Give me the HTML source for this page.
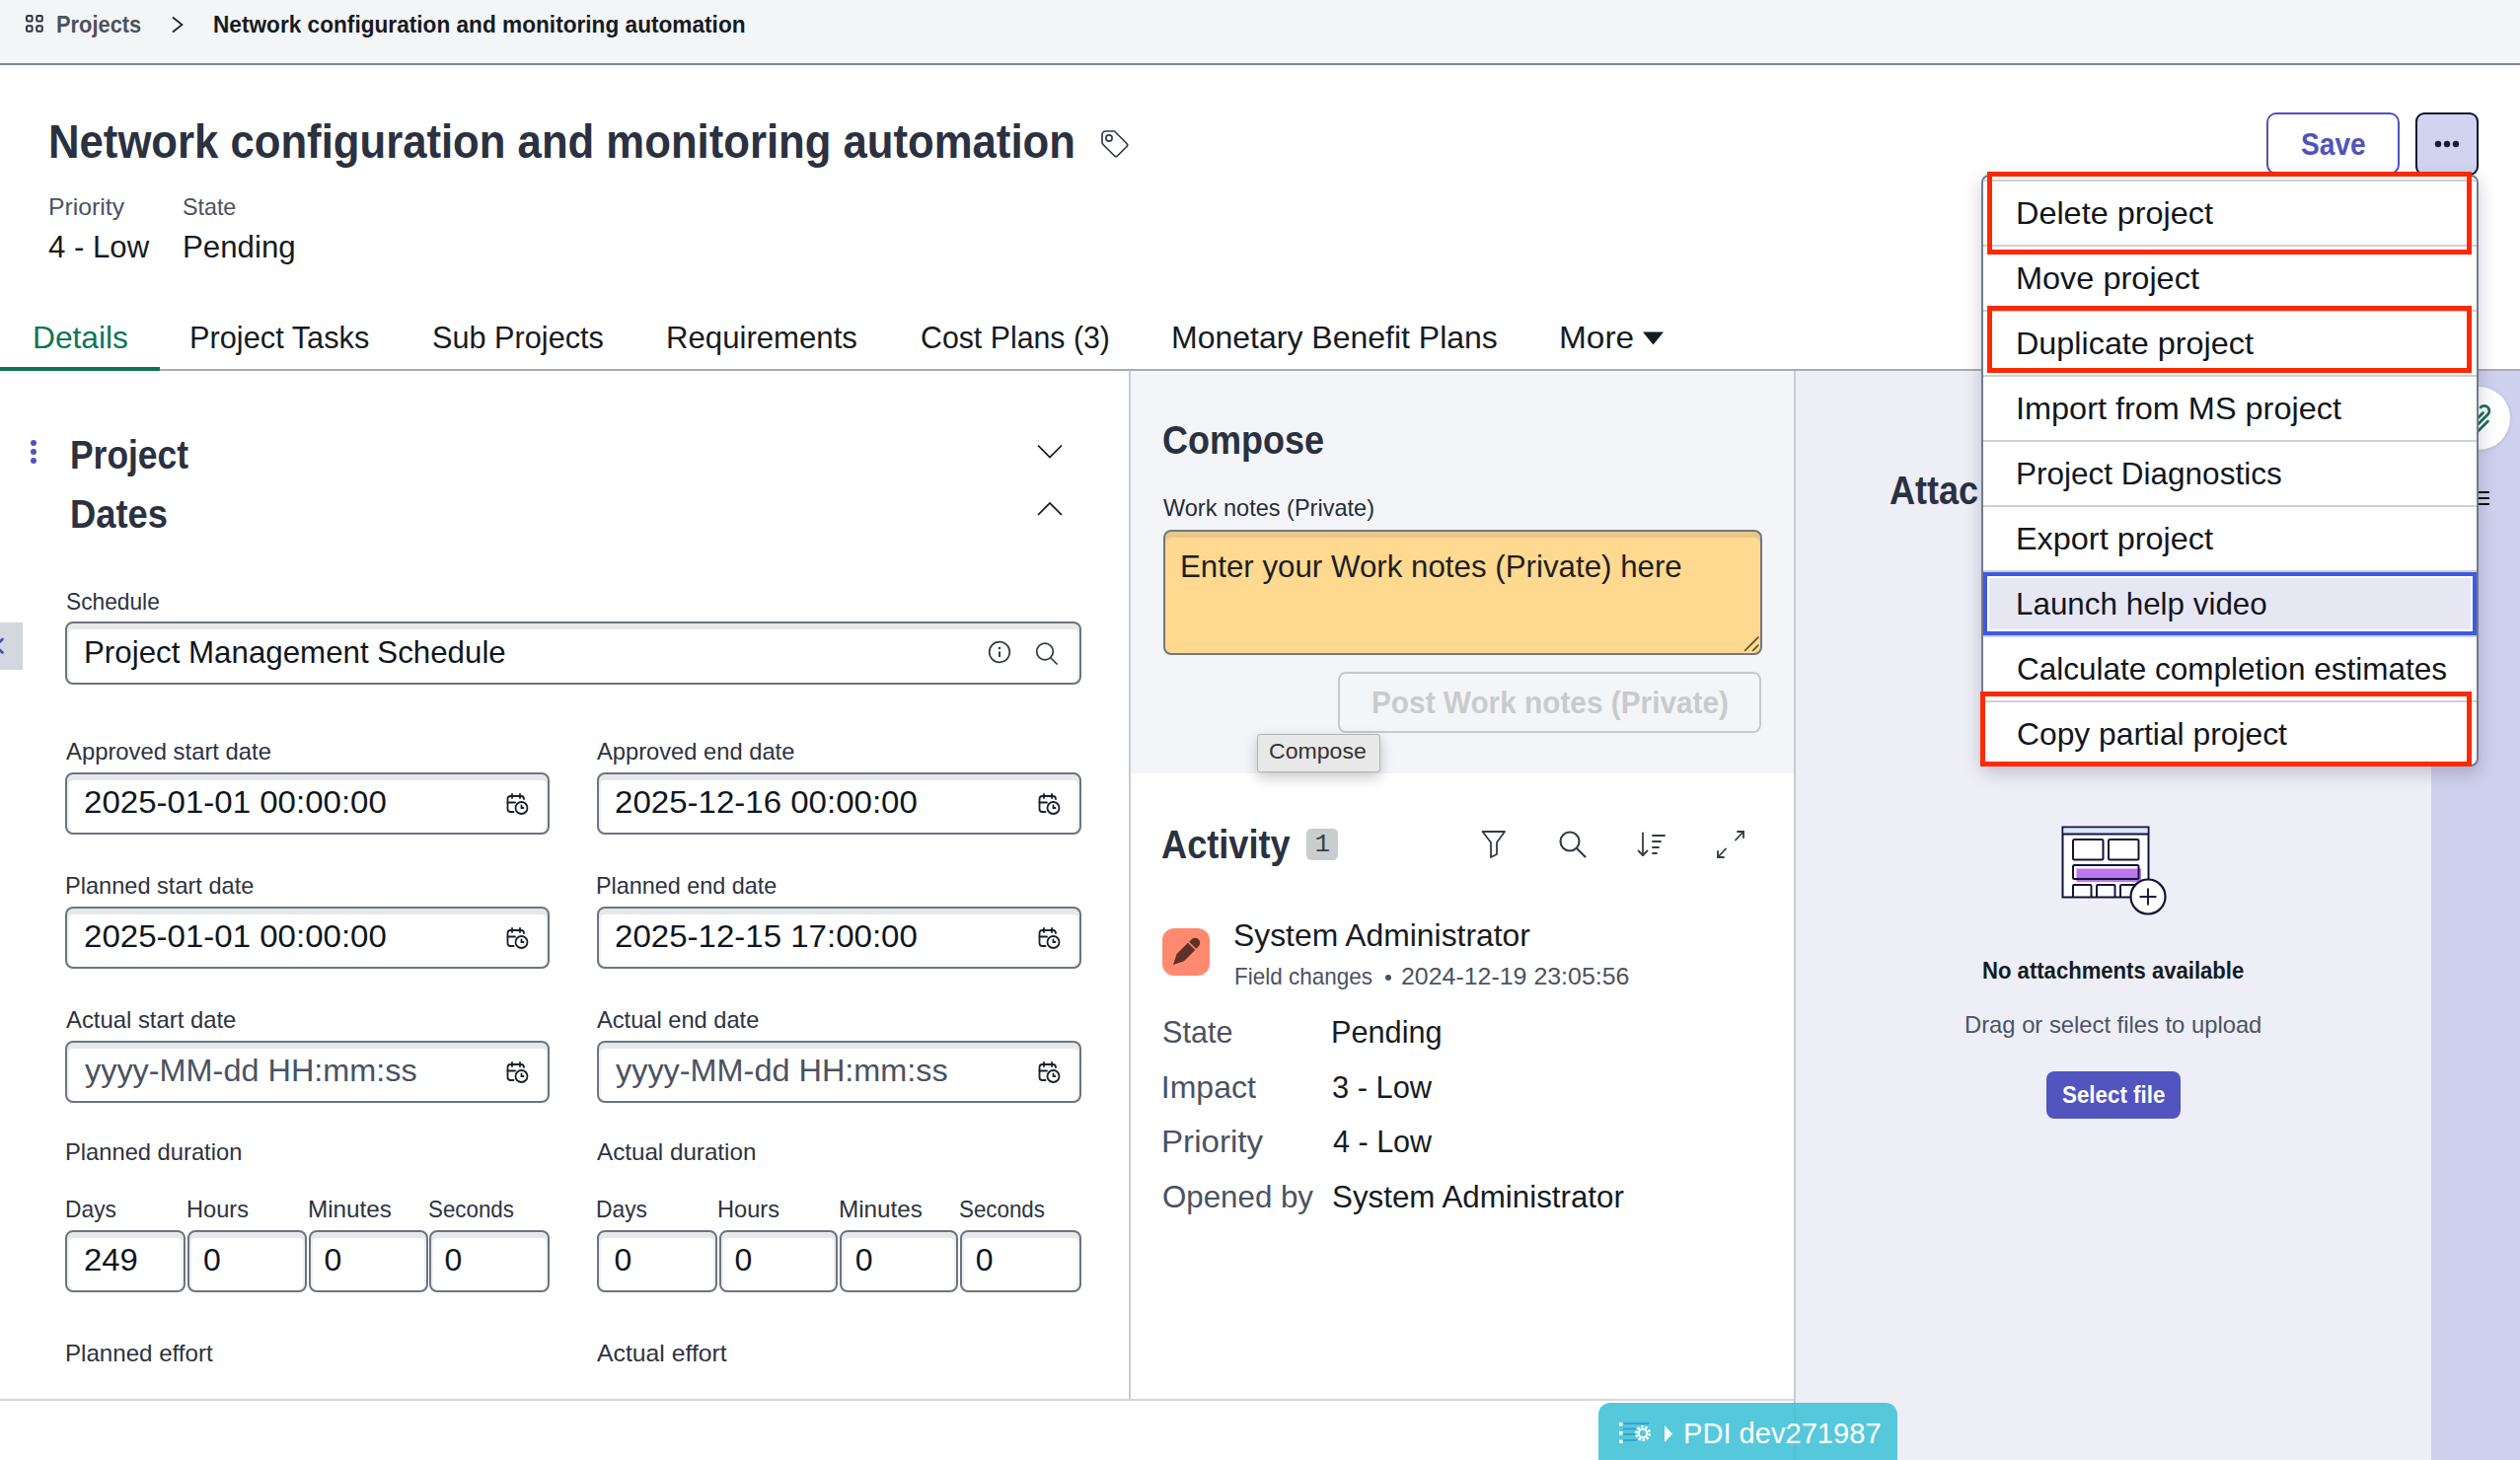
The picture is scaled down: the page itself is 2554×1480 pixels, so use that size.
<!DOCTYPE html>
<html><head><meta charset="utf-8"><title>Project</title>
<style>
html,body{margin:0;padding:0}
body{width:2554px;height:1480px;overflow:hidden;position:relative;background:#fff;font-family:"Liberation Sans",sans-serif}
.a{position:absolute;box-sizing:border-box}
.t{position:absolute;white-space:nowrap;transform-origin:0 0;font-family:"Liberation Sans",sans-serif;z-index:2}
.inp{position:absolute;box-sizing:border-box;border:2px solid #6e7380;border-radius:8px;background:#fff;box-shadow:inset 0 6px 0 #e6e8ea, inset 2px 0 0 #eef0f2, inset -2px 0 0 #eef0f2}
svg{position:absolute;overflow:visible}
.sep{position:absolute;left:2010px;width:500px;height:2px;background:#cdd0d6;z-index:6}
.red{position:absolute;box-sizing:border-box;border:5px solid #fb2a04;z-index:20}
</style></head><body>
<!-- top bar -->
<div class="a" style="left:0;top:0;width:2554px;height:64px;background:#f4f5f7"></div>
<div class="a" style="left:0;top:64px;width:2554px;height:2px;background:#80868f"></div>
<svg style="left:26px;top:15px" width="18" height="18" viewBox="0 0 18 18"><g fill="none" stroke="#30363f" stroke-width="2"><rect x="1" y="1" width="5.6" height="5.6" rx="1.3"/><rect x="11.2" y="1" width="5.6" height="5.6" rx="1.3"/><rect x="1" y="11.2" width="5.6" height="5.6" rx="1.3"/><rect x="11.2" y="11.2" width="5.6" height="5.6" rx="1.3"/></g></svg>
<svg style="left:0;top:0" width="1" height="1"><polyline points="175,17.5 184.5,25 175,32.5" fill="none" stroke="#1a1e25" stroke-width="1.7"/></svg>
<!-- tag icon -->
<svg style="left:0;top:0" width="1" height="1"><g fill="none" stroke="#343a46" stroke-width="1.7" stroke-linejoin="round"><path d="M1117,137 Q1117,133 1121,133 L1129.5,133 L1142,145.5 Q1143.5,147 1142,148.5 L1132.5,158 Q1131,159.5 1129.5,158 L1118,146.5 Q1117,145.5 1117,144 Z"/><circle cx="1124" cy="140" r="3.1"/></g></svg>
<!-- buttons -->
<div class="a" style="left:2297px;top:114px;width:135px;height:63px;border:2px solid #5053bd;border-radius:10px;background:#fff"></div>
<div class="a" style="left:2448px;top:114px;width:64px;height:64px;border:2px solid #0f1230;border-radius:9px;background:#d2d3ef"></div>
<svg style="left:0;top:0" width="1" height="1"><g fill="#1a1c3a"><circle cx="2471" cy="146" r="3.2"/><circle cx="2480" cy="146" r="3.2"/><circle cx="2489" cy="146" r="3.2"/></g></svg>
<!-- tabs -->
<div class="a" style="left:0;top:374px;width:2554px;height:2px;background:#a9abb5"></div>
<div class="a" style="left:0;top:372px;width:162px;height:4px;background:#0e7553"></div>
<svg style="left:0;top:0" width="1" height="1"><polygon points="1665,336.5 1686,336.5 1675.5,349.5" fill="#161b22"/></svg>
<!-- panels -->
<div class="a" style="left:1144px;top:376px;width:2px;height:1043px;background:#c9cbd3"></div>
<div class="a" style="left:1146px;top:376px;width:672px;height:408px;background:#f4f5f8"></div>
<div class="a" style="left:1818px;top:376px;width:2px;height:1104px;background:#c9cbd3"></div>
<div class="a" style="left:1820px;top:376px;width:644px;height:1104px;background:#eeeef7"></div>
<div class="a" style="left:2464px;top:376px;width:90px;height:1104px;background:#cfd0ed"></div>
<div class="a" style="left:0;top:1418px;width:1818px;height:2px;background:#d5d7dd"></div>
<!-- section header -->
<svg style="left:0;top:0" width="1" height="1"><g fill="#5053bd"><circle cx="34" cy="449" r="3"/><circle cx="34" cy="458" r="3"/><circle cx="34" cy="467" r="3"/></g>
<g fill="none" stroke="#111" stroke-width="1.7"><polyline points="1052,451.5 1064,463.5 1076,451.5"/><polyline points="1052,522 1064,510 1076,522"/></g></svg>
<div class="a" style="left:0;top:631px;width:23px;height:48px;background:#d5d7e0"></div>
<svg style="left:0;top:0" width="1" height="1"><polyline points="2.5,648 -4.5,654.8 2.5,661.5" fill="none" stroke="#4b4fb0" stroke-width="2.6" stroke-linecap="round"/></svg>
<!-- inputs -->
<div class="inp" style="left:66px;top:630px;width:1030px;height:64px"></div>
<svg style="left:0;top:0" width="1" height="1"><g fill="none" stroke="#343a46" stroke-width="1.7"><circle cx="1013" cy="661" r="10.3"/><circle cx="1059" cy="660.5" r="8.3"/><line x1="1065" y1="667" x2="1071.5" y2="673.5"/><line x1="1013" y1="660.5" x2="1013" y2="666" stroke-width="2"/></g><circle cx="1013" cy="657" r="1.3" fill="#343a46"/></svg>
<div class="inp" style="left:66px;top:782.5px;width:491px;height:63px"></div>
<div class="inp" style="left:605px;top:782.5px;width:491px;height:63px"></div>
<div class="inp" style="left:66px;top:918.5px;width:491px;height:63px"></div>
<div class="inp" style="left:605px;top:918.5px;width:491px;height:63px"></div>
<div class="inp" style="left:66px;top:1054.5px;width:491px;height:63px"></div>
<div class="inp" style="left:605px;top:1054.5px;width:491px;height:63px"></div>
<svg style="left:0;top:0" width="1" height="1">
<g fill="none" stroke="#1b1f27" stroke-width="1.8" stroke-linecap="round" transform="translate(513,804)"><path d="M7.5,19 H4.5 Q1.5,19 1.5,16 V6 Q1.5,3 4.5,3 H15 Q18,3 18,6"/><line x1="6" y1="1" x2="6" y2="5"/><line x1="14" y1="1" x2="14" y2="5"/><line x1="1.5" y1="9.5" x2="9" y2="9.5"/><circle cx="15.5" cy="15" r="6"/><path d="M15.5,12.5 V15 H17.5"/></g><g fill="none" stroke="#1b1f27" stroke-width="1.8" stroke-linecap="round" transform="translate(1052,804)"><path d="M7.5,19 H4.5 Q1.5,19 1.5,16 V6 Q1.5,3 4.5,3 H15 Q18,3 18,6"/><line x1="6" y1="1" x2="6" y2="5"/><line x1="14" y1="1" x2="14" y2="5"/><line x1="1.5" y1="9.5" x2="9" y2="9.5"/><circle cx="15.5" cy="15" r="6"/><path d="M15.5,12.5 V15 H17.5"/></g><g fill="none" stroke="#1b1f27" stroke-width="1.8" stroke-linecap="round" transform="translate(513,940)"><path d="M7.5,19 H4.5 Q1.5,19 1.5,16 V6 Q1.5,3 4.5,3 H15 Q18,3 18,6"/><line x1="6" y1="1" x2="6" y2="5"/><line x1="14" y1="1" x2="14" y2="5"/><line x1="1.5" y1="9.5" x2="9" y2="9.5"/><circle cx="15.5" cy="15" r="6"/><path d="M15.5,12.5 V15 H17.5"/></g><g fill="none" stroke="#1b1f27" stroke-width="1.8" stroke-linecap="round" transform="translate(1052,940)"><path d="M7.5,19 H4.5 Q1.5,19 1.5,16 V6 Q1.5,3 4.5,3 H15 Q18,3 18,6"/><line x1="6" y1="1" x2="6" y2="5"/><line x1="14" y1="1" x2="14" y2="5"/><line x1="1.5" y1="9.5" x2="9" y2="9.5"/><circle cx="15.5" cy="15" r="6"/><path d="M15.5,12.5 V15 H17.5"/></g><g fill="none" stroke="#1b1f27" stroke-width="1.8" stroke-linecap="round" transform="translate(513,1076)"><path d="M7.5,19 H4.5 Q1.5,19 1.5,16 V6 Q1.5,3 4.5,3 H15 Q18,3 18,6"/><line x1="6" y1="1" x2="6" y2="5"/><line x1="14" y1="1" x2="14" y2="5"/><line x1="1.5" y1="9.5" x2="9" y2="9.5"/><circle cx="15.5" cy="15" r="6"/><path d="M15.5,12.5 V15 H17.5"/></g><g fill="none" stroke="#1b1f27" stroke-width="1.8" stroke-linecap="round" transform="translate(1052,1076)"><path d="M7.5,19 H4.5 Q1.5,19 1.5,16 V6 Q1.5,3 4.5,3 H15 Q18,3 18,6"/><line x1="6" y1="1" x2="6" y2="5"/><line x1="14" y1="1" x2="14" y2="5"/><line x1="1.5" y1="9.5" x2="9" y2="9.5"/><circle cx="15.5" cy="15" r="6"/><path d="M15.5,12.5 V15 H17.5"/></g>
</svg>
<div class="inp" style="left:66px;top:1246.5px;width:121.5px;height:63px"></div>
<div class="inp" style="left:189.5px;top:1246.5px;width:121px;height:63px"></div>
<div class="inp" style="left:312.5px;top:1246.5px;width:121px;height:63px"></div>
<div class="inp" style="left:435px;top:1246.5px;width:122px;height:63px"></div>
<div class="inp" style="left:605px;top:1246.5px;width:122px;height:63px"></div>
<div class="inp" style="left:729px;top:1246.5px;width:120px;height:63px"></div>
<div class="inp" style="left:851px;top:1246.5px;width:120px;height:63px"></div>
<div class="inp" style="left:973px;top:1246.5px;width:123px;height:63px"></div>
<!-- compose -->
<div class="inp" style="left:1178.5px;top:536.5px;width:607.5px;height:127px;background:#fed98f;border-color:#73767f;box-shadow:inset 0 6px 0 #e6c889"></div>
<svg style="left:0;top:0" width="1" height="1"><g stroke="#5e4a1c" stroke-width="1.6" stroke-linecap="round"><line x1="1768.5" y1="659.5" x2="1782" y2="646"/><line x1="1776.5" y1="659.5" x2="1782" y2="654"/></g></svg>
<div class="a" style="left:1355.5px;top:680.5px;width:429.5px;height:62.5px;border:2px solid #c8c9cc;border-radius:8px"></div>
<div class="a" style="left:1273.5px;top:743.5px;width:125px;height:39px;background:#e8e8e8;border:1px solid #b3b3b3;border-radius:3px;box-shadow:0 5px 14px rgba(0,0,0,.22);z-index:3"></div>
<!-- activity -->
<div class="a" style="left:1324px;top:840px;width:32px;height:32px;background:#c9cdcd;border-radius:5px"></div>
<div class="t" style="left:1332.5px;top:843px;font-family:'Liberation Mono',monospace;font-size:26px;line-height:26px;color:#3a3f3f">1</div>
<svg style="left:0;top:0" width="1" height="1"><g fill="none" stroke="#343a46" stroke-width="1.8" stroke-linejoin="round" stroke-linecap="round">
<path d="M1502.5,843 H1525 L1517,854 V866 L1511,869 V854 Z"/>
<circle cx="1591" cy="853" r="9.5" stroke-width="2.1"/><line x1="1598" y1="860" x2="1606.5" y2="868.5" stroke-width="2.1"/>
<line x1="1665" y1="844.5" x2="1665" y2="867"/><polyline points="1660.5,862.5 1665,867 1669.5,862.5"/>
<line x1="1675" y1="847" x2="1687" y2="847"/><line x1="1675" y1="853" x2="1683" y2="853"/><line x1="1675" y1="859" x2="1681" y2="859"/><line x1="1675" y1="865" x2="1679" y2="865"/>
<line x1="1759" y1="851.5" x2="1767" y2="843"/><polyline points="1761,843 1767,843 1767,849"/>
<line x1="1749" y1="860.5" x2="1741" y2="869"/><polyline points="1741,863 1741,869 1747,869"/>
</g></svg>
<div class="a" style="left:1178px;top:941px;width:48px;height:48px;background:#ff8a70;border-radius:12px"></div>
<svg style="left:0;top:0" width="1" height="1"><g fill="#5f3228" transform="translate(1202,965) rotate(-45)">
<path d="M-18.5,0 L-8,-5.2 H8 V5.2 H-8 Z"/><path d="M9.5,-5 H13 A5,5 0 0 1 13,5 H9.5 Z"/></g></svg>
<svg style="left:0;top:0" width="1" height="1"><circle cx="1407" cy="991" r="3" fill="#4b5261"/></svg>
<!-- attachments -->
<svg style="left:0;top:0" width="1" height="1">
<rect x="2090.5" y="838.5" width="87" height="71" fill="#fff" stroke="#12123a" stroke-width="2"/>
<rect x="2091.5" y="839.5" width="85" height="6" fill="#dde3ff"/>
<line x1="2090.5" y1="845.5" x2="2177.5" y2="845.5" stroke="#12123a" stroke-width="2"/>
<g fill="none" stroke="#12123a" stroke-width="2"><rect x="2101" y="851" width="30.5" height="20.5" rx="1.5"/><rect x="2137" y="851" width="30.5" height="20.5" rx="1.5"/></g>
<rect x="2104.5" y="880.5" width="65.5" height="13.5" fill="#bb77ea"/>
<rect x="2101" y="877" width="66.5" height="14" rx="1.5" fill="none" stroke="#12123a" stroke-width="2"/>
<g fill="none" stroke="#12123a" stroke-width="2"><path d="M2101,909 V898 Q2101,897 2102,897 H2118.5 Q2119.5,897 2119.5,898 V909"/><path d="M2125,909 V898 Q2125,897 2126,897 H2142.5 Q2143.5,897 2143.5,898 V909"/><path d="M2149,909 V898 Q2149,897 2150,897 H2166"/></g>
<circle cx="2177" cy="909" r="17.5" fill="#fff" stroke="#12123a" stroke-width="2.2"/>
<g stroke="#12123a" stroke-width="1.9"><line x1="2168.5" y1="909" x2="2185.5" y2="909"/><line x1="2177" y1="900.5" x2="2177" y2="917.5"/></g>
</svg>
<div class="a" style="left:2074px;top:1086px;width:136px;height:48px;background:#5254bf;border-radius:8px"></div>
<div class="a" style="left:2480px;top:392px;width:64px;height:64px;border-radius:50%;background:#fff;box-shadow:0 1px 4px rgba(0,0,0,.12)"></div>
<svg style="left:0;top:0" width="1" height="1"><g fill="none" stroke="#167052" stroke-width="2.7" stroke-linecap="round"><path d="M2514,413 A4.8,4.8 0 0 1 2521.5,420 L2511,430.5"/><path d="M2516.5,418.5 L2511,424"/><path d="M2521.5,427 L2511,437.5"/></g>
<g stroke="#111" stroke-width="2"><line x1="2511" y1="499" x2="2523" y2="499"/><line x1="2511" y1="505" x2="2523" y2="505"/><line x1="2511" y1="511" x2="2523" y2="511"/></g></svg>
<!-- menu -->
<div class="a" style="left:2008px;top:177px;width:504px;height:600px;background:#fff;border:2px solid #747a88;border-radius:8px;box-shadow:0 6px 18px rgba(20,20,60,.22);z-index:5"></div>
<div class="sep" style="top:182px"></div>
<div class="sep" style="top:248px"></div>
<div class="sep" style="top:314px"></div>
<div class="sep" style="top:380px"></div>
<div class="sep" style="top:446px"></div>
<div class="sep" style="top:512px"></div>
<div class="sep" style="top:578px"></div>
<div class="sep" style="top:644px"></div>
<div class="sep" style="top:710px"></div>
<div class="a" style="left:2010px;top:579.5px;width:500px;height:64.5px;border:4px solid #3e5ae0;background:#e7e7f4;box-shadow:inset 0 0 0 2px #fff;z-index:6"></div>
<div class="red" style="left:2014px;top:174px;width:491px;height:84px"></div>
<div class="red" style="left:2014px;top:309.5px;width:491px;height:68px"></div>
<div class="red" style="left:2007px;top:701px;width:498px;height:76px"></div>
<!-- PDI badge -->
<div class="a" style="left:1620px;top:1422px;width:303px;height:80px;background:#56c8dc;border-radius:12px;z-index:10"></div>
<svg style="left:0;top:0;z-index:11" width="1" height="1">
<g fill="#fff"><rect x="1641" y="1442" width="3.5" height="3.5"/><rect x="1641" y="1451" width="3.5" height="3.5"/><rect x="1641" y="1459.5" width="3.5" height="3.5"/></g>
<g stroke="#2a9fcc" stroke-width="1.6"><line x1="1645" y1="1443" x2="1671" y2="1443"/><line x1="1645" y1="1448.5" x2="1658" y2="1448.5"/><line x1="1645" y1="1454" x2="1657" y2="1454"/><line x1="1645" y1="1460" x2="1659" y2="1460"/></g>
<circle cx="1665" cy="1453" r="6" fill="none" stroke="#fff" stroke-width="4" stroke-dasharray="2.2 1.5"/>
<circle cx="1665" cy="1453" r="4.2" fill="none" stroke="#fff" stroke-width="1.8"/>
<polygon points="1687,1445 1695,1453.5 1687,1462" fill="#fff"/>
</svg>
<div class="a" style="left:1818px;top:1422px;width:2px;height:58px;background:rgba(0,0,0,.035);z-index:12"></div>
<div class="t" style="left:57.1px;top:12.6px;font-size:24px;line-height:24px;color:#4b5261;font-weight:700;transform:scaleX(0.9104);">Projects</div>
<div class="t" style="left:216.1px;top:12.6px;font-size:24px;line-height:24px;color:#161b22;font-weight:700;transform:scaleX(0.9433);">Network configuration and monitoring automation</div>
<div class="t" style="left:49.3px;top:120.2px;font-size:48px;line-height:48px;color:#2b3140;font-weight:700;transform:scaleX(0.9099);">Network configuration and monitoring automation</div>
<div class="t" style="left:49.0px;top:197.6px;font-size:24px;line-height:24px;color:#4b5261;transform:scaleX(1.0316);">Priority</div>
<div class="t" style="left:185.0px;top:197.6px;font-size:24px;line-height:24px;color:#4b5261;transform:scaleX(0.9691);">State</div>
<div class="t" style="left:49.2px;top:233.8px;font-size:32px;line-height:32px;color:#161b22;transform:scaleX(0.9733);">4 - Low</div>
<div class="t" style="left:184.7px;top:233.8px;font-size:32px;line-height:32px;color:#161b22;transform:scaleX(0.9768);">Pending</div>
<div class="t" style="left:2332.0px;top:129.8px;font-size:32px;line-height:32px;color:#5053bd;font-weight:700;transform:scaleX(0.8791);">Save</div>
<div class="t" style="left:32.5px;top:325.8px;font-size:32px;line-height:32px;color:#0e7553;transform:scaleX(0.9914);">Details</div>
<div class="t" style="left:192.4px;top:325.8px;font-size:32px;line-height:32px;color:#161b22;transform:scaleX(0.9611);">Project Tasks</div>
<div class="t" style="left:438.0px;top:325.8px;font-size:32px;line-height:32px;color:#161b22;transform:scaleX(0.9586);">Sub Projects</div>
<div class="t" style="left:675.1px;top:325.8px;font-size:32px;line-height:32px;color:#161b22;transform:scaleX(0.9735);">Requirements</div>
<div class="t" style="left:933.1px;top:325.8px;font-size:32px;line-height:32px;color:#161b22;transform:scaleX(0.9466);">Cost Plans (3)</div>
<div class="t" style="left:1187.0px;top:325.8px;font-size:32px;line-height:32px;color:#161b22;">Monetary Benefit Plans</div>
<div class="t" style="left:1579.6px;top:325.8px;font-size:32px;line-height:32px;color:#161b22;transform:scaleX(1.0455);">More</div>
<div class="t" style="left:71.2px;top:441.0px;font-size:40px;line-height:40px;color:#2b3140;font-weight:700;transform:scaleX(0.8853);">Project</div>
<div class="t" style="left:71.2px;top:501.0px;font-size:40px;line-height:40px;color:#2b3140;font-weight:700;transform:scaleX(0.9082);">Dates</div>
<div class="t" style="left:66.6px;top:597.6px;font-size:24px;line-height:24px;color:#2d3340;transform:scaleX(0.9470);">Schedule</div>
<div class="t" style="left:85.0px;top:644.8px;font-size:32px;line-height:32px;color:#10161d;transform:scaleX(0.9775);">Project Management Schedule</div>
<div class="t" style="left:67.0px;top:749.6px;font-size:24px;line-height:24px;color:#2d3340;transform:scaleX(0.9928);">Approved start date</div>
<div class="t" style="left:605.3px;top:749.6px;font-size:24px;line-height:24px;color:#2d3340;transform:scaleX(0.9877);">Approved end date</div>
<div class="t" style="left:85.0px;top:796.8px;font-size:32px;line-height:32px;color:#10161d;transform:scaleX(1.0327);">2025-01-01 00:00:00</div>
<div class="t" style="left:623.3px;top:796.8px;font-size:32px;line-height:32px;color:#10161d;transform:scaleX(1.0327);">2025-12-16 00:00:00</div>
<div class="t" style="left:66.0px;top:885.6px;font-size:24px;line-height:24px;color:#2d3340;transform:scaleX(0.9822);">Planned start date</div>
<div class="t" style="left:604.3px;top:885.6px;font-size:24px;line-height:24px;color:#2d3340;transform:scaleX(0.9742);">Planned end date</div>
<div class="t" style="left:85.0px;top:932.8px;font-size:32px;line-height:32px;color:#10161d;transform:scaleX(1.0327);">2025-01-01 00:00:00</div>
<div class="t" style="left:623.3px;top:932.8px;font-size:32px;line-height:32px;color:#10161d;transform:scaleX(1.0327);">2025-12-15 17:00:00</div>
<div class="t" style="left:67.0px;top:1021.6px;font-size:24px;line-height:24px;color:#2d3340;transform:scaleX(0.9938);">Actual start date</div>
<div class="t" style="left:605.3px;top:1021.6px;font-size:24px;line-height:24px;color:#2d3340;transform:scaleX(0.9853);">Actual end date</div>
<div class="t" style="left:86.0px;top:1068.8px;font-size:32px;line-height:32px;color:#4b5261;transform:scaleX(1.0129);">yyyy-MM-dd HH:mm:ss</div>
<div class="t" style="left:624.3px;top:1068.8px;font-size:32px;line-height:32px;color:#4b5261;transform:scaleX(1.0129);">yyyy-MM-dd HH:mm:ss</div>
<div class="t" style="left:66.0px;top:1155.6px;font-size:24px;line-height:24px;color:#2d3340;transform:scaleX(0.9881);">Planned duration</div>
<div class="t" style="left:605.3px;top:1155.6px;font-size:24px;line-height:24px;color:#2d3340;transform:scaleX(1.0078);">Actual duration</div>
<div class="t" style="left:66.0px;top:1213.6px;font-size:24px;line-height:24px;color:#2d3340;transform:scaleX(0.9501);">Days</div>
<div class="t" style="left:189.0px;top:1213.6px;font-size:24px;line-height:24px;color:#2d3340;transform:scaleX(0.9838);">Hours</div>
<div class="t" style="left:312.0px;top:1213.6px;font-size:24px;line-height:24px;color:#2d3340;transform:scaleX(1.0116);">Minutes</div>
<div class="t" style="left:434.1px;top:1213.6px;font-size:24px;line-height:24px;color:#2d3340;transform:scaleX(0.9308);">Seconds</div>
<div class="t" style="left:604.3px;top:1213.6px;font-size:24px;line-height:24px;color:#2d3340;transform:scaleX(0.9501);">Days</div>
<div class="t" style="left:727.3px;top:1213.6px;font-size:24px;line-height:24px;color:#2d3340;transform:scaleX(0.9838);">Hours</div>
<div class="t" style="left:850.3px;top:1213.6px;font-size:24px;line-height:24px;color:#2d3340;transform:scaleX(1.0116);">Minutes</div>
<div class="t" style="left:972.4px;top:1213.6px;font-size:24px;line-height:24px;color:#2d3340;transform:scaleX(0.9308);">Seconds</div>
<div class="t" style="left:85.0px;top:1260.8px;font-size:32px;line-height:32px;color:#10161d;transform:scaleX(1.0273);">249</div>
<div class="t" style="left:206.0px;top:1260.8px;font-size:32px;line-height:32px;color:#10161d;">0</div>
<div class="t" style="left:328.5px;top:1260.8px;font-size:32px;line-height:32px;color:#10161d;">0</div>
<div class="t" style="left:450.5px;top:1260.8px;font-size:32px;line-height:32px;color:#10161d;">0</div>
<div class="t" style="left:622.4px;top:1260.8px;font-size:32px;line-height:32px;color:#10161d;">0</div>
<div class="t" style="left:744.6px;top:1260.8px;font-size:32px;line-height:32px;color:#10161d;">0</div>
<div class="t" style="left:866.7px;top:1260.8px;font-size:32px;line-height:32px;color:#10161d;">0</div>
<div class="t" style="left:988.8px;top:1260.8px;font-size:32px;line-height:32px;color:#10161d;">0</div>
<div class="t" style="left:66.0px;top:1359.6px;font-size:24px;line-height:24px;color:#2d3340;transform:scaleX(1.0045);">Planned effort</div>
<div class="t" style="left:605.3px;top:1359.6px;font-size:24px;line-height:24px;color:#2d3340;transform:scaleX(1.0316);">Actual effort</div>
<div class="t" style="left:1178.1px;top:426.0px;font-size:40px;line-height:40px;color:#2b3140;font-weight:700;transform:scaleX(0.9000);">Compose</div>
<div class="t" style="left:1178.6px;top:503.1px;font-size:24px;line-height:24px;color:#262c38;transform:scaleX(0.9802);">Work notes (Private)</div>
<div class="t" style="left:1195.5px;top:557.8px;font-size:32px;line-height:32px;color:#1f1f22;transform:scaleX(0.9774);">Enter your Work notes (Private) here</div>
<div class="t" style="left:1389.6px;top:695.8px;font-size:32px;line-height:32px;color:#c9cacd;font-weight:700;transform:scaleX(0.9309);">Post Work notes (Private)</div>
<div class="t" style="left:1176.6px;top:836.0px;font-size:40px;line-height:40px;color:#2b3140;font-weight:700;transform:scaleX(0.9047);">Activity</div>
<div class="t" style="left:1249.5px;top:931.8px;font-size:32px;line-height:32px;color:#161b22;transform:scaleX(0.9953);">System Administrator</div>
<div class="t" style="left:1250.6px;top:977.6px;font-size:24px;line-height:24px;color:#4b5261;transform:scaleX(0.9365);">Field changes</div>
<div class="t" style="left:1420.4px;top:977.6px;font-size:24px;line-height:24px;color:#4b5261;transform:scaleX(1.0383);">2024-12-19 23:05:56</div>
<div class="t" style="left:1177.8px;top:1029.8px;font-size:32px;line-height:32px;color:#4b5261;transform:scaleX(0.9558);">State</div>
<div class="t" style="left:1348.9px;top:1029.8px;font-size:32px;line-height:32px;color:#161b22;transform:scaleX(0.9592);">Pending</div>
<div class="t" style="left:1176.8px;top:1085.8px;font-size:32px;line-height:32px;color:#4b5261;">Impact</div>
<div class="t" style="left:1349.8px;top:1085.8px;font-size:32px;line-height:32px;color:#161b22;transform:scaleX(0.9635);">3 - Low</div>
<div class="t" style="left:1176.7px;top:1141.3px;font-size:32px;line-height:32px;color:#4b5261;transform:scaleX(1.0352);">Priority</div>
<div class="t" style="left:1350.8px;top:1141.3px;font-size:32px;line-height:32px;color:#161b22;transform:scaleX(0.9544);">4 - Low</div>
<div class="t" style="left:1177.8px;top:1197.3px;font-size:32px;line-height:32px;color:#4b5261;transform:scaleX(0.9771);">Opened by</div>
<div class="t" style="left:1349.8px;top:1197.3px;font-size:32px;line-height:32px;color:#161b22;transform:scaleX(0.9788);">System Administrator</div>
<div class="t" style="left:1915.1px;top:477.0px;font-size:40px;line-height:40px;color:#2b3140;font-weight:700;transform:scaleX(0.9011);">Attac</div>
<div class="t" style="left:2008.7px;top:971.6px;font-size:24px;line-height:24px;color:#161b22;font-weight:700;transform:scaleX(0.9206);">No attachments available</div>
<div class="t" style="left:1991.0px;top:1026.6px;font-size:24px;line-height:24px;color:#4b5261;transform:scaleX(0.9907);">Drag or select files to upload</div>
<div class="t" style="left:2089.7px;top:1097.6px;font-size:24px;line-height:24px;color:#ffffff;font-weight:700;transform:scaleX(0.9310);">Select file</div>
<div class="t" style="left:2042.5px;top:199.8px;font-size:32px;line-height:32px;color:#11161d;transform:scaleX(1.0125);z-index:7;">Delete project</div>
<div class="t" style="left:2042.5px;top:265.8px;font-size:32px;line-height:32px;color:#11161d;transform:scaleX(1.0149);z-index:7;">Move project</div>
<div class="t" style="left:2042.5px;top:331.8px;font-size:32px;line-height:32px;color:#11161d;transform:scaleX(1.0108);z-index:7;">Duplicate project</div>
<div class="t" style="left:2042.5px;top:397.8px;font-size:32px;line-height:32px;color:#11161d;transform:scaleX(1.0139);z-index:7;">Import from MS project</div>
<div class="t" style="left:2042.5px;top:463.8px;font-size:32px;line-height:32px;color:#11161d;transform:scaleX(0.9845);z-index:7;">Project Diagnostics</div>
<div class="t" style="left:2042.5px;top:529.8px;font-size:32px;line-height:32px;color:#11161d;transform:scaleX(1.0126);z-index:7;">Export project</div>
<div class="t" style="left:2042.5px;top:595.8px;font-size:32px;line-height:32px;color:#11161d;transform:scaleX(0.9807);z-index:7;">Launch help video</div>
<div class="t" style="left:2043.5px;top:661.8px;font-size:32px;line-height:32px;color:#11161d;transform:scaleX(0.9844);z-index:7;">Calculate completion estimates</div>
<div class="t" style="left:2043.5px;top:727.8px;font-size:32px;line-height:32px;color:#11161d;transform:scaleX(0.9935);z-index:7;">Copy partial project</div>
<div class="t" style="left:1705.7px;top:1437.5px;font-size:30px;line-height:30px;color:#ffffff;transform:scaleX(0.9699);z-index:11;">PDI dev271987</div>
<div class="t" style="left:1286.0px;top:751.3px;font-size:22px;line-height:22px;color:#333333;transform:scaleX(1.0493);z-index:4;">Compose</div>
</body></html>
